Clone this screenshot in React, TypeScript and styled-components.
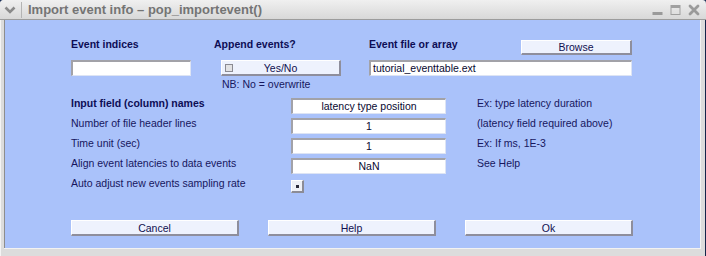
import React from "react";
import styled, { createGlobalStyle } from "styled-components";

const GlobalStyle = createGlobalStyle`
  html, body {
    margin: 0;
    padding: 0;
    background: #1b2f57;
  }
  * { box-sizing: border-box; }
`;

const Window = styled.div`
  width: 706px;
  height: 256px;
  display: flex;
  flex-direction: column;
  background: #dcdcdc;
  border-radius: 4px 4px 0 0;
  overflow: hidden;
  box-shadow: inset -1px 0 0 #15254a;
  font-family: "Liberation Sans", Arial, sans-serif;
`;

const TitleBar = styled.div`
  height: 20px;
  flex-shrink: 0;
  display: flex;
  align-items: center;
  background: linear-gradient(#f0f0f0, #d8d8d8);
  border-bottom: 1px solid #9c9c9c;
  padding: 0 6px 0 4px;
`;

const Separator = styled.span`
  width: 1px;
  height: 16px;
  background: #b4b4b4;
  margin: 0 6px 0 5px;
`;

const Title = styled.span`
  font-family: "Liberation Sans", Arial, sans-serif;
  font-weight: bold;
  font-size: 13px;
  color: #747474;
  flex: 1;
  white-space: nowrap;
`;

const Controls = styled.div`
  display: flex;
  align-items: center;
  gap: 7px;
`;

const Frame = styled.div`
  flex: 1;
  display: flex;
  padding: 0 5px 7px 3px;
  border-left: 1px solid #f4f4f4;
`;

const Body = styled.div`
  flex: 1;
  background: #aac2fa;
  border-right: 1px solid #f2f2f2;
  border-bottom: 1px solid #f2f2f2;
  box-shadow: inset 1px 0 0 #8d8d8d;
  padding: 18px 0 0 67px;
  display: flex;
  flex-direction: column;
  font-size: 10.5px;
  color: #15155e;
`;

const TopGrid = styled.div`
  display: grid;
  grid-template-columns: 143px 155px 263px;
  grid-template-rows: 17px 23px 12px;
`;

const Label = styled.div<{ $bold?: boolean }>`
  font-weight: ${(p) => (p.$bold ? "bold" : "normal")};
  line-height: 12px;
  white-space: nowrap;
  color: ${(p) => (p.$bold ? "#0d0d55" : "#16165e")};
`;

const HeadCell = styled.div`
  display: flex;
  justify-content: space-between;
  align-items: flex-start;
`;

const Button = styled.button<{ $w: number }>`
  width: ${(p) => p.$w}px;
  height: 16px;
  padding: 0;
  margin: 0;
  font-family: "Liberation Sans", Arial, sans-serif;
  font-size: 10.5px;
  color: #101050;
  background: #eef2fd;
  border: none;
  border-top: 1px solid #ffffff;
  border-left: 1px solid #ffffff;
  border-right: 2px solid #8e8e9c;
  border-bottom: 2px solid #8e8e9c;
  display: flex;
  align-items: center;
  justify-content: center;
  position: relative;
`;

const BrowseButton = styled(Button)`
  margin-top: 2px;
  height: 15px;
`;

const Input = styled.div<{ $w?: number; $align?: string }>`
  width: ${(p) => (p.$w ? `${p.$w}px` : "100%")};
  height: 16px;
  background: #ffffff;
  border-top: 2px solid #a2a2a8;
  border-left: 2px solid #a2a2a8;
  border-right: 1px solid #dde4f4;
  border-bottom: 1px solid #dde4f4;
  font-size: 10.5px;
  color: #080830;
  line-height: 13px;
  padding: 0 2px;
  text-align: ${(p) => p.$align || "left"};
  white-space: nowrap;
`;

const ToggleWrap = styled.div`
  padding-left: 7px;
  margin-top: 5px;
`;

const CellTop = styled.div`
  margin-top: 5px;
`;

const Tick = styled.span`
  position: absolute;
  left: 3px;
  top: 3px;
  width: 8px;
  height: 8px;
  background: #e2e2e4;
  border: 1px solid #8a8a92;
`;

const Note = styled(Label)`
  padding-left: 8px;
`;

const Fields = styled.div`
  margin-top: 7px;
  display: flex;
  flex-direction: column;
`;

const FieldRow = styled.div`
  display: grid;
  grid-template-columns: 220px 155px 1fr;
  height: 20px;
  align-items: start;
`;

const FieldBox = styled(Input)`
  margin-top: 1px;
`;

const Hint = styled(Label)`
  padding-left: 31px;
`;

const Check = styled.div`
  margin-top: 3px;
  width: 13px;
  height: 13px;
  background: #eef0f6;
  border-top: 1px solid #ffffff;
  border-left: 1px solid #ffffff;
  border-right: 2px solid #8c8c96;
  border-bottom: 2px solid #8c8c96;
  display: flex;
  align-items: center;
  justify-content: center;

  &::after {
    content: "";
    width: 3px;
    height: 3px;
    background: #2a2a3a;
  }
`;

const Footer = styled.div`
  margin-top: 23px;
  width: 562px;
  display: flex;
  justify-content: space-between;
`;

const fields = [
  { label: "Input field (column) names", bold: true, value: "latency type position", hint: "Ex: type latency duration" },
  { label: "Number of file header lines", value: "1", hint: "(latency field required above)" },
  { label: "Time unit (sec)", value: "1", hint: "Ex: If ms, 1E-3" },
  { label: "Align event latencies to data events", value: "NaN", hint: "See Help" },
];

export default function App() {
  return (
    <>
      <GlobalStyle />
      <Window>
        <TitleBar>
          <svg width="12" height="10" viewBox="0 0 12 10">
            <path d="M1.5 2.5 L6 7 L10.5 2.5" fill="none" stroke="#8a8a8a" strokeWidth="2.6" />
          </svg>
          <Separator />
          <Title>Import event info – pop_importevent()</Title>
          <Controls>
            <svg width="11" height="12" viewBox="0 0 11 12">
              <rect x="0.5" y="8" width="10" height="3" fill="#9a9a9a" />
            </svg>
            <svg width="11" height="12" viewBox="0 0 11 12">
              <rect x="1" y="1.5" width="9" height="9" fill="none" stroke="#a0a0a0" strokeWidth="1" />
              <rect x="1" y="1" width="9" height="3" fill="#a0a0a0" />
            </svg>
            <svg width="12" height="12" viewBox="0 0 12 12">
              <path d="M2 2 L10 10 M10 2 L2 10" stroke="#9a9a9a" strokeWidth="2.8" strokeLinecap="round" />
            </svg>
          </Controls>
        </TitleBar>
        <Frame>
          <Body>
            <TopGrid>
              <Label $bold>Event indices</Label>
              <Label $bold>Append events?</Label>
              <HeadCell>
                <Label $bold>Event file or array</Label>
                <BrowseButton $w={111}>Browse</BrowseButton>
              </HeadCell>
              <CellTop>
                <Input $w={120} />
              </CellTop>
              <ToggleWrap>
                <Button $w={120}>
                  <Tick />
                  Yes/No
                </Button>
              </ToggleWrap>
              <CellTop>
                <Input>tutorial_eventtable.ext</Input>
              </CellTop>
              <div />
              <Note>NB: No = overwrite</Note>
              <div />
            </TopGrid>
            <Fields>
              {fields.map((f) => (
                <FieldRow key={f.label}>
                  <Label $bold={f.bold}>{f.label}</Label>
                  <FieldBox $align="center">{f.value}</FieldBox>
                  <Hint>{f.hint}</Hint>
                </FieldRow>
              ))}
              <FieldRow>
                <Label>Auto adjust new events sampling rate</Label>
                <Check />
                <div />
              </FieldRow>
            </Fields>
            <Footer>
              <Button $w={168}>Cancel</Button>
              <Button $w={168}>Help</Button>
              <Button $w={168}>Ok</Button>
            </Footer>
          </Body>
        </Frame>
      </Window>
    </>
  );
}
